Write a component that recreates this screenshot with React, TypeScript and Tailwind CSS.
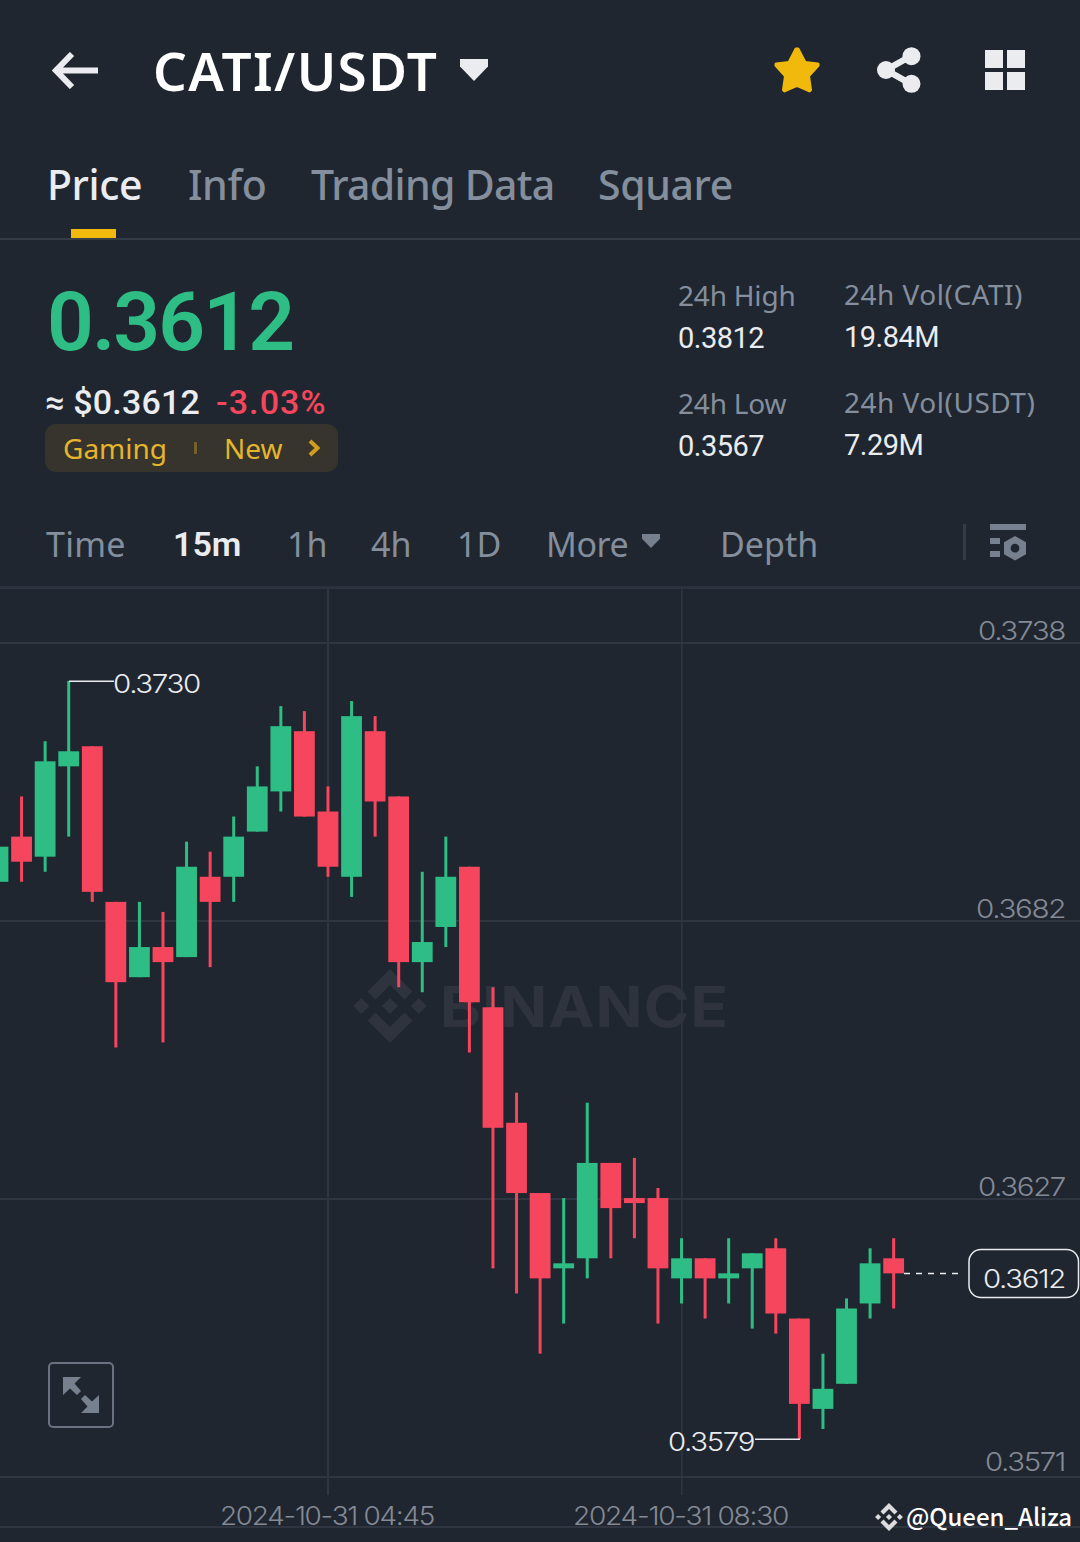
import clsx from 'clsx';

interface Candle {
  up: boolean;
  high: number;
  top: number;
  bottom: number;
  low: number;
}

// [direction, high, body top, body bottom, low], prices in 1/10000 USDT
const RAW: [string, number, number, number, number][] = [
  ['u', 3697, 3697, 3690, 3690],
  ['d', 3707, 3699, 3694, 3690],
  ['u', 3718, 3714, 3695, 3692],
  ['u', 3730, 3716, 3713, 3699],
  ['d', 3717, 3717, 3688, 3686],
  ['d', 3686, 3686, 3670, 3657],
  ['u', 3686, 3677, 3671, 3671],
  ['d', 3684, 3677, 3674, 3658],
  ['u', 3698, 3693, 3675, 3675],
  ['d', 3696, 3691, 3686, 3673],
  ['u', 3703, 3699, 3691, 3686],
  ['u', 3713, 3709, 3700, 3700],
  ['u', 3725, 3721, 3708, 3704],
  ['d', 3724, 3720, 3703, 3703],
  ['d', 3709, 3704, 3693, 3691],
  ['u', 3726, 3723, 3691, 3687],
  ['d', 3723, 3720, 3706, 3699],
  ['d', 3707, 3707, 3674, 3669],
  ['u', 3692, 3678, 3674, 3668],
  ['u', 3699, 3691, 3681, 3677],
  ['d', 3693, 3693, 3666, 3656],
  ['d', 3669, 3665, 3641, 3613],
  ['d', 3648, 3642, 3628, 3608],
  ['d', 3628, 3628, 3611, 3596],
  ['u', 3627, 3614, 3613, 3602],
  ['u', 3646, 3634, 3615, 3611],
  ['d', 3634, 3634, 3625, 3615],
  ['d', 3635, 3627, 3626, 3619],
  ['d', 3629, 3627, 3613, 3602],
  ['u', 3619, 3615, 3611, 3606],
  ['d', 3615, 3615, 3611, 3603],
  ['u', 3619, 3612, 3611, 3606],
  ['u', 3616, 3616, 3613, 3601],
  ['d', 3619, 3617, 3604, 3600],
  ['d', 3603, 3603, 3586, 3579],
  ['u', 3596, 3589, 3585, 3581],
  ['u', 3607, 3605, 3590, 3590],
  ['u', 3617, 3614, 3606, 3603],
  ['d', 3619, 3615, 3612, 3605],
];

const CANDLES: Candle[] = RAW.map(([dir, high, top, bottom, low]) => ({
  up: dir === 'u',
  high,
  top,
  bottom,
  low,
}));

const CHART_TOP = 586;
const priceY = (p: number) => 681 - CHART_TOP + (3730 - p) * 5.02;
const candleX = (i: number) => -2 + i * 23.57;

const TABS = [
  { label: 'Price', className: 'w-[141px] text-[#eaecef]' },
  { label: 'Info', className: 'w-[123px] text-[#848e9c]' },
  { label: 'Trading Data', className: 'w-[287px] tracking-[-0.7px] text-[#848e9c]' },
  { label: 'Square', className: 'text-[#848e9c]' },
];

const AXIS = [
  { label: '0.3738', line: 56.5, y: 54, width: 87 },
  { label: '0.3682', line: 334.5, y: 332, width: 89 },
  { label: '0.3627', line: 612.5, y: 610, width: 87 },
  { label: '0.3571', line: 890.5, y: 885, width: 80 },
];

function BinanceMark({ className }: { className?: string }) {
  return (
    <svg viewBox="0 0 74 74" className={className} fill="currentColor">
      <path d="M37 0l22.5 22.5-8 8L37 16 22.5 30.5l-8-8z" />
      <path d="M37 74l22.5-22.5-8-8L37 58 22.5 43.5l-8 8z" />
      <path d="M37 29l8 8-8 8-8-8zM8.2 29l8 8-8 8-8-8zM65.8 29l8 8-8 8-8-8z" />
    </svg>
  );
}

function Caret({ className }: { className?: string }) {
  return (
    <svg viewBox="0 0 28 22" preserveAspectRatio="none" className={className} fill="currentColor">
      <path d="M0 0h28v7.5L14 22 0 7.5z" />
    </svg>
  );
}

function Header() {
  return (
    <header className="flex h-[140px] items-center pl-[52px] pr-[55px] text-[#eaecef]">
      <svg width="46" height="37" viewBox="0 0 46 37" fill="none" stroke="currentColor" strokeWidth="6">
        <path d="M4 18.5h42M20 2L4 18.5 20 35" />
      </svg>
      <h1 className="ml-[55px] mt-[2px] w-[307px] whitespace-nowrap font-['Noto_Sans'] text-[53px] font-semibold tracking-[1.4px] text-white">
        CATI/USDT
      </h1>
      <Caret className="h-[22px] w-[28px]" />
      <svg
        width="46"
        height="46"
        viewBox="0 0 46 46"
        className="ml-auto"
        fill="#f0b90b"
        stroke="#f0b90b"
        strokeWidth="3"
        strokeLinejoin="round"
      >
        <path d="M22 2h2l7 13.5 13 1.5v1.5L34.5 29l2 14-1 1L23 38.5 10.5 44l-1-1 2-14L2 18.500V17l13-1.500z" />
      </svg>
      <svg width="44" height="46" viewBox="0 0 44 46" className="ml-[57px]" fill="currentColor">
        <path d="M9 23L34 9M9 23l25 14" stroke="currentColor" strokeWidth="6.5" />
        <circle cx="9" cy="23" r="9" />
        <circle cx="34.5" cy="9.2" r="9" />
        <circle cx="34.5" cy="36.8" r="9" />
      </svg>
      <div className="ml-[64px] grid grid-cols-2 gap-[4px]">
        {[0, 1, 2, 3].map((i) => (
          <span key={i} className="size-[18px] bg-[#eaecef]" />
        ))}
      </div>
    </header>
  );
}

function Tabs() {
  return (
    <nav className="relative flex h-[100px] border-b-2 border-[#333b47] pl-[47px] font-['Noto_Sans'] text-[41px] font-medium leading-[88px] tracking-[-0.4px]">
      {TABS.map((tab) => (
        <span key={tab.label} className={clsx('whitespace-nowrap', tab.className)}>
          {tab.label}
        </span>
      ))}
      <span className="absolute bottom-0 left-[71px] h-[9px] w-[45px] bg-[#f0b90b]" />
    </nav>
  );
}

function Stat({ label, value, wide }: { label: string; value: string; wide?: boolean }) {
  return (
    <div className="whitespace-nowrap">
      <p
        className={clsx(
          "font-['Noto_Sans'] text-[28px] leading-[42px] text-[#848e9c]",
          wide ? 'tracking-[0.5px]' : 'tracking-[-0.2px]'
        )}
      >
        {label}
      </p>
      <p className="mt-px font-['Roboto'] text-[29px] leading-[42px] tracking-[-0.5px] text-[#eaecef]">{value}</p>
    </div>
  );
}

function Summary() {
  return (
    <section className="flex h-[260px]">
      <div className="w-[678px] pl-[45px] pt-[41px]">
        <p className="ml-[2px] font-['Roboto'] text-[82px] font-semibold leading-[82px] tracking-[-1.9px] text-[#2ebd85]">
          0.3612
        </p>
        <p className="mt-[18px] flex h-[43px] font-['Roboto'] text-[34px] font-medium leading-[43px]">
          <span className="w-[171px] tracking-[0.2px] text-[#eaecef]">≈ $0.3612</span>
          <span className="tracking-[1.1px] text-[#f6465d]">-3.03%</span>
        </p>
        <div className="flex h-[48px] w-[293px] items-center rounded-[11px] bg-[#36342c] pl-[18px] font-['Noto_Sans'] text-[28px] text-[#e5b52c]">
          <span className="w-[131px]">Gaming</span>
          <span className="h-[12px] w-[3px] bg-[#75602a]" />
          <span className="ml-[27px] w-[84px]">New</span>
          <svg width="14" height="18" viewBox="0 0 14 18" fill="none" stroke="#d09e1a" strokeWidth="4">
            <path d="M2 2l7.5 7L2 16" />
          </svg>
        </div>
      </div>
      <div className="flex w-[166px] flex-col gap-[23px] pt-[34px]">
        <Stat label="24h High" value="0.3812" />
        <Stat label="24h Low" value="0.3567" />
      </div>
      <div className="flex flex-col gap-[23px] pt-[33px]">
        <Stat label="24h Vol(CATI)" value="19.84M" wide />
        <Stat label="24h Vol(USDT)" value="7.29M" wide />
      </div>
    </section>
  );
}

function Intervals() {
  return (
    <div className="flex h-[86px] items-center whitespace-nowrap pl-[46px] font-['Noto_Sans'] text-[34px] text-[#848e9c]">
      <span className="mt-[2px] w-[127px] tracking-[0.3px]">Time</span>
      <span className="mt-[2px] w-[114px] font-['Roboto'] font-semibold text-[#eaecef]">15m</span>
      <span className="mt-[2px] w-[84px]">1h</span>
      <span className="mt-[2px] w-[86px]">4h</span>
      <span className="mt-[2px] w-[89px]">1D</span>
      <span className="mt-[2px] w-[96px] tracking-[-0.4px]">More</span>
      <Caret className="mb-[4px] h-[14px] w-[18px] text-[#76808f]" />
      <span className="ml-[60px] mt-[2px]">Depth</span>
      <span className="mb-[3px] ml-auto h-[36px] w-[3px] bg-[#333b47]" />
      <svg width="36" height="37" viewBox="0 0 36 37" className="mb-[2px] ml-[24px] mr-[54px]" fill="#76808f">
        <path d="M0 0h36v6H0zM0 14h10v6H0zM0 27h10v6H0z" />
        <path
          fillRule="evenodd"
          d="M25 12l11 6.2v12L25 36.5l-11-6.3v-12zM25 19.8a4.4 4.4 0 100 8.8 4.4 4.4 0 000-8.8z"
        />
      </svg>
    </div>
  );
}

function Chart() {
  return (
    <section className="relative h-[956px] overflow-hidden">
      <svg
        width="1080"
        height="956"
        viewBox="0 0 1080 956"
        className="block font-['Inter'] text-[26px] font-light tracking-[-1.2px]"
      >
        <rect width="1080" height="3" fill="#2b323d" />
        <g fill="#2f3641">
          {AXIS.map((a) => (
            <rect key={a.label} x="0" y={a.line - 0.5} width="1080" height="2" />
          ))}
          <rect x="0" y="940" width="1080" height="2" />
          <rect x="327" y="3" width="2" height="906" />
          <rect x="681" y="3" width="1.5" height="906" />
        </g>

        {/* Watermark */}
        <g fill="#2f333e">
          <g transform="translate(353 383)">
            <path d="M37 0l22.5 22.5-8 8L37 16 22.5 30.5l-8-8z" />
            <path d="M37 74l22.5-22.5-8-8L37 58 22.5 43.5l-8 8z" />
            <path d="M37 29l8 8-8 8-8-8zM8.2 29l8 8-8 8-8-8zM65.8 29l8 8-8 8-8-8z" />
          </g>
          <text
            x="440"
            y="441"
            textLength="289"
            lengthAdjust="spacingAndGlyphs"
            className="text-[57px] font-bold tracking-[1px]"
          >
            BINANCE
          </text>
        </g>

        {CANDLES.map((c, i) => {
          const x = candleX(i);
          return (
            <g key={i} fill={c.up ? '#2ebd85' : '#f6465d'}>
              <rect x={x - 1.5} y={priceY(c.high)} width="3" height={priceY(c.low) - priceY(c.high)} />
              <rect x={x - 10.4} y={priceY(c.top)} width="20.8" height={priceY(c.bottom) - priceY(c.top)} />
            </g>
          );
        })}

        {/* High / low markers */}
        <g fill="#eaecef">
          <rect x="69" y="94.5" width="45" height="1.5" />
          <text x="113" y="107" textLength="87" lengthAdjust="spacingAndGlyphs">
            0.3730
          </text>
          <rect x="755" y="852.5" width="45" height="1.5" />
          <text x="668" y="865" textLength="86" lengthAdjust="spacingAndGlyphs">
            0.3579
          </text>
        </g>

        <g fill="#848a96">
          {AXIS.map((a) => (
            <text key={a.label} x={1065 - a.width} y={a.y} textLength={a.width} lengthAdjust="spacingAndGlyphs">
              {a.label}
            </text>
          ))}
          <text x="220" y="939" textLength="214" lengthAdjust="spacingAndGlyphs">
            2024-10-31 04:45
          </text>
          <text x="573" y="939" textLength="215" lengthAdjust="spacingAndGlyphs">
            2024-10-31 08:30
          </text>
        </g>

        {/* Last price */}
        <path d="M904 687.5h55" stroke="#eaecef" strokeWidth="1.5" strokeDasharray="6 6" />
        <rect x="969" y="663.5" width="109.5" height="48" rx="12" fill="#1f262f" stroke="#eaecef" strokeWidth="1.5" />
        <text x="983" y="702" textLength="82" lengthAdjust="spacingAndGlyphs" fill="#eaecef">
          0.3612
        </text>
      </svg>

      <button className="absolute left-[48px] top-[776px] flex size-[66px] items-center justify-center rounded-[5px] border-2 border-[#697281]">
        <svg width="36" height="36" viewBox="0 0 36 36" fill="#76808f">
          <path d="M0 0h18l-6.5 6.5L18 14l-4 4-7-6.5L0 18z" />
          <path d="M36 36H18l6.5-6.5L18 22l4-4 7 6.5 7-6.5z" />
        </svg>
      </button>

      <div className="absolute bottom-[7px] right-[8px] flex items-center gap-[3px] text-white">
        <BinanceMark className="size-[28px] text-[#dcdcdc]" />
        <span className="mb-[2px] font-['Noto_Sans_CJK_SC',sans-serif] text-[24px] font-medium leading-[34px]">
          @Queen_Aliza
        </span>
      </div>
    </section>
  );
}

export default function App() {
  return (
    <main className="h-[1542px] w-[1080px] overflow-hidden bg-[#1f262f]">
      <Header />
      <Tabs />
      <Summary />
      <Intervals />
      <Chart />
    </main>
  );
}
